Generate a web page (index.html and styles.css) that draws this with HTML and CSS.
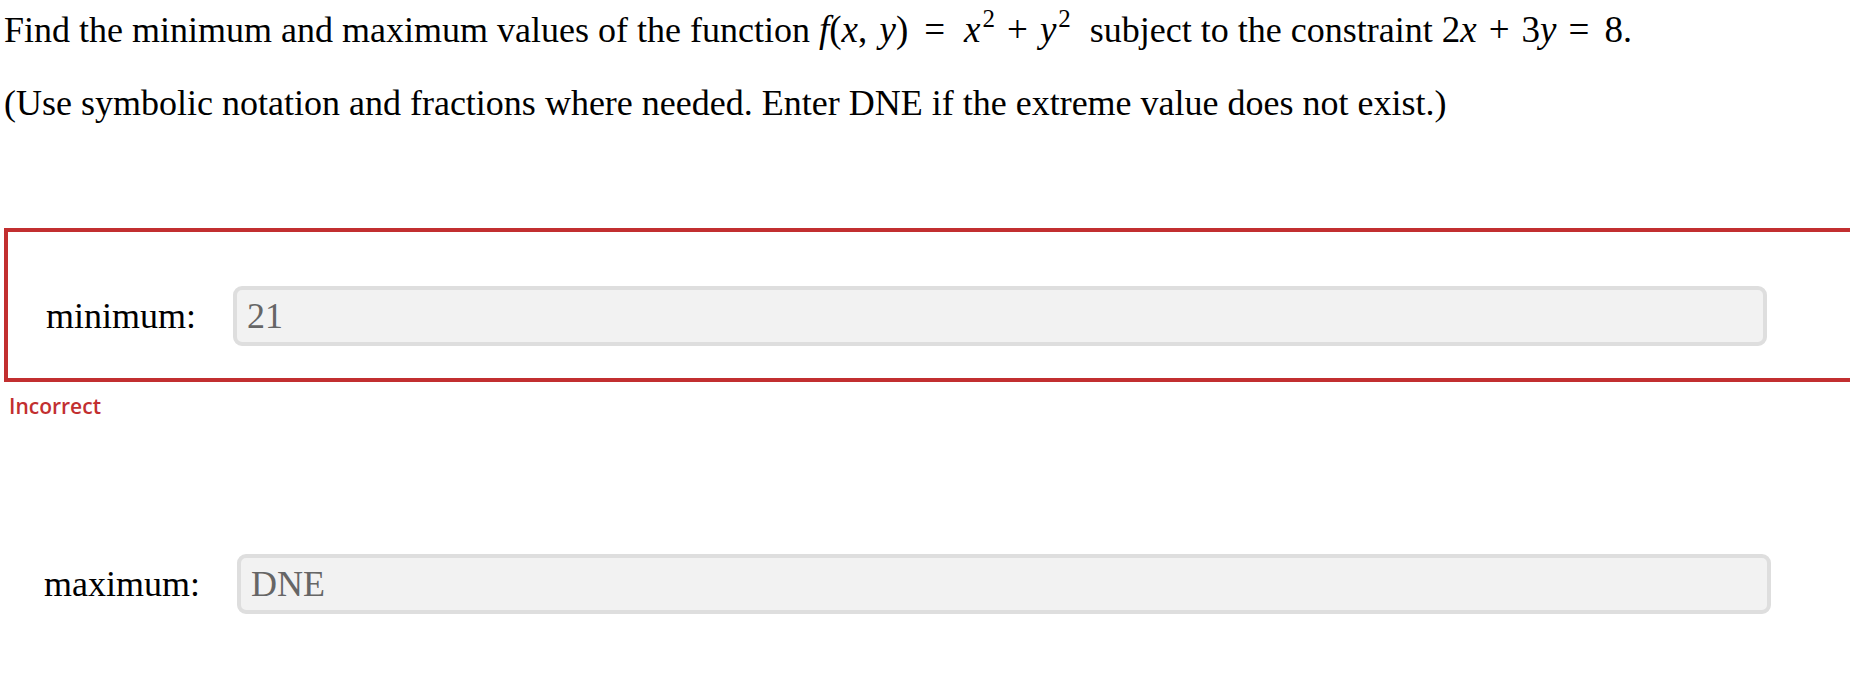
FILE: index.html
```html
<!DOCTYPE html>
<html lang="en">
<head>
    <meta charset="UTF-8">
    <title>Question</title>
    <link rel="stylesheet" href="styles.css">
</head>
<body>

    <div class="pergunta">
        <p class="enunciado">Find the minimum and maximum values of the function <span class="math primeira"><i>f</i>(<i>x</i><span class="virgula">,</span> <i>y</i>)<span class="rel">=</span><i>x</i><sup>2</sup><span class="bin">+</span><i>y</i><sup>2</sup></span> subject to the constraint <span class="math segunda">2<i>x</i><span class="bin">+</span>3<i>y</i><span class="rel">=</span>8</span>.</p>
        <p class="instrucao">(Use symbolic notation and fractions where needed. Enter DNE if the extreme value does not exist.)</p>

        <div class="resposta errada">
            <label for="minimo">minimum:</label>
            <input type="text" id="minimo" value="21" readonly>
        </div>
        <div class="feedback">Incorrect</div>

        <div class="resposta ultima">
            <label for="maximo">maximum:</label>
            <input type="text" id="maximo" value="DNE" readonly>
        </div>
    </div>

</body>
</html>
```

FILE: styles.css
```css
* {
    margin: 0;
    padding: 0;
    box-sizing: border-box;
}

body {
    background: #fff;
    color: #000;
    font-family: "Liberation Serif", "Times New Roman", serif;
    font-size: 36px;
}

.pergunta {
    padding-left: 4px;
}

p {
    line-height: 44px;
    white-space: nowrap;
}

.enunciado {
    margin-top: 8px;
}

.instrucao {
    margin-top: 29px;
}

.math {
    font-family: "Liberation Serif", "Times New Roman", serif;
    font-size: 37px;
}

.math i {
    font-style: italic;
}

.math sup {
    font-size: 25px;
    line-height: 0;
    vertical-align: 15px;
    margin-left: 2px;
}

.math .virgula {
    margin-right: 3px;
}

.math.primeira {
    margin-right: 10px;
}

.rel {
    margin: 0 19px 0 16px;
}

.segunda .rel {
    margin: 0 15px 0 12px;
}

.bin {
    margin: 0 12px;
}

.resposta {
    display: flex;
    align-items: center;
    gap: 37px;
    border: 4px solid transparent;
    border-right: none;
    padding: 54px 0 32px 38px;
}

.resposta.errada {
    margin-top: 103px;
    border-color: #c22f30;
}

.resposta.ultima {
    margin-top: 76px;
    padding-left: 36px;
}

.resposta label {
    white-space: nowrap;
}

.resposta input {
    width: 1534px;
    height: 60px;
    border: 4px solid #dedede;
    border-radius: 9px;
    background: #f2f2f2;
    color: #666;
    font-family: "Liberation Serif", "Times New Roman", serif;
    font-size: 36px;
    padding: 0 10px;
    outline: none;
}

.feedback {
    margin-top: 10px;
    padding-left: 5px;
    color: #c22f30;
    font-family: "Open Sans", sans-serif;
    font-weight: 600;
    font-size: 21px;
    line-height: 28px;
}
```
